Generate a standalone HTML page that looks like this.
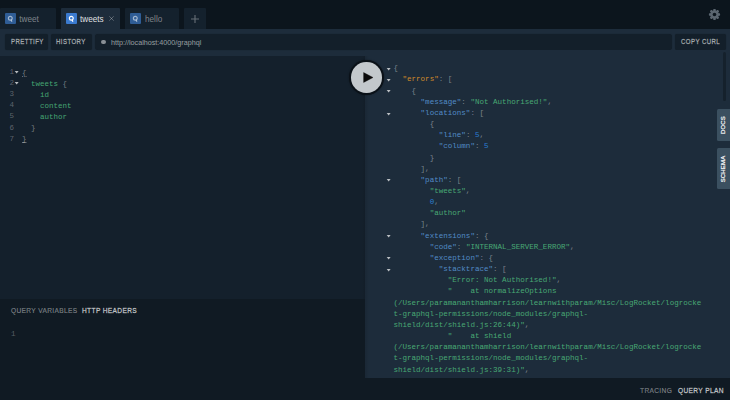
<!DOCTYPE html>
<html><head><meta charset="utf-8">
<style>
*{margin:0;padding:0;box-sizing:border-box}
html,body{width:730px;height:400px;overflow:hidden;background:#0c151d;font-family:"Liberation Sans",sans-serif}
.abs{position:absolute}
.tab{position:absolute;top:8px;height:20.5px;background:#14212d;border-radius:1px 1px 0 0}
.tab.active{background:#1d2c3b;height:21px}
.qicon{position:absolute;top:4.8px;width:11px;height:11px;border-radius:1px;background:#2f5d96}
.tab.active .qicon{background:#3b7bd0}
.qicon svg{position:absolute;left:0;top:0}
.lbl{position:absolute;white-space:nowrap;transform-origin:0 0;line-height:10px;font-family:"Liberation Sans",sans-serif}
.tabtxt{font-size:8.2px;color:rgba(255,255,255,0.45)}
.tab.active .tabtxt{color:rgba(255,255,255,0.88)}
#toolbar{position:absolute;left:0;top:28.5px;width:730px;height:27.5px;background:#1d2c3b}
.btn{position:absolute;top:34px;height:16px;background:#131f2a;border-radius:2px;box-shadow:0 0 1px rgba(0,0,0,0.35)}
.bt{font-size:7.9px;-webkit-text-stroke:0.35px rgba(255,255,255,0.45);color:rgba(255,255,255,0.5);top:37.3px;letter-spacing:0.55px;transform:scaleX(0.77)}
#qed{position:absolute;left:0;top:56px;width:365px;height:242.5px;background:#14202c}
#res{position:absolute;left:365px;top:50px;width:365px;height:328px;background:#1d2c3b}
#vars{position:absolute;left:0;top:298.5px;width:365px;height:101.5px;background:#101a23}
#foot{position:absolute;left:365px;top:378px;width:365px;height:22px;background:#101a23}
.code{position:absolute;font-family:"Liberation Mono",monospace;font-size:7.5px;white-space:pre;line-height:11.16px}
.ln{position:absolute;font-family:"Liberation Mono",monospace;font-size:7.5px;color:rgba(255,255,255,0.3);line-height:11.15px;white-space:pre}
.p{color:rgba(255,255,255,0.4)}
.mb{text-decoration:underline;text-decoration-color:rgba(255,255,255,0.35);text-underline-offset:1px}
.f{color:#45a673}
.k{color:#528bc6}
.s{color:#48a874}
.n{color:#2a7ed3}
.o{color:#d08a2a}
.arr{position:absolute;width:0;height:0;border-left:1.9px solid transparent;border-right:1.9px solid transparent;border-top:2.7px solid rgba(255,255,255,0.72)}
.side{position:absolute;left:717px;width:13px;background:#3b5060;border-radius:1.5px 0 0 1.5px}
.side span{position:absolute;left:47%;top:calc(50% + 0.6px);transform:translate(-50%,-50%) rotate(-90deg);font-size:6px;line-height:7px;-webkit-text-stroke:0.3px rgba(255,255,255,0.8);color:rgba(255,255,255,0.85);letter-spacing:0.15px;white-space:nowrap}
.ft{font-size:7.5px;-webkit-text-stroke:0.2px rgba(255,255,255,0.4);letter-spacing:0.4px;transform:scaleX(0.88)}
</style></head><body>

<!-- tabs -->
<div class="tab" style="left:0;width:56px">
  <div class="qicon" style="left:5px"><svg width="11" height="11" viewBox="0 0 11 11"><circle cx="5.3" cy="5.2" r="1.9" fill="none" stroke="rgba(255,255,255,0.55)" stroke-width="1.2"/><path d="M6.1 6.8L6.9 8.7" stroke="rgba(255,255,255,0.55)" stroke-width="1.2"/></svg></div>
  <div class="lbl tabtxt" style="left:19.3px;top:7.2px">tweet</div>
</div>
<div class="tab active" style="left:61px;width:59px">
  <div class="qicon" style="left:5px"><svg width="11" height="11" viewBox="0 0 11 11"><circle cx="5.3" cy="5.2" r="1.9" fill="none" stroke="#fff" stroke-width="1.2"/><path d="M6.1 6.8L6.9 8.7" stroke="#fff" stroke-width="1.2"/></svg></div>
  <div class="lbl tabtxt" style="left:19px;top:7.2px">tweets</div>
  <svg class="abs" style="left:48px;top:8.1px" width="5" height="5" viewBox="0 0 5 5"><path d="M0.3 0.3L4.7 4.7M4.7 0.3L0.3 4.7" stroke="rgba(255,255,255,0.4)" stroke-width="0.7"/></svg>
</div>
<div class="tab" style="left:125px;width:54px">
  <div class="qicon" style="left:5px"><svg width="11" height="11" viewBox="0 0 11 11"><circle cx="5.3" cy="5.2" r="1.9" fill="none" stroke="rgba(255,255,255,0.55)" stroke-width="1.2"/><path d="M6.1 6.8L6.9 8.7" stroke="rgba(255,255,255,0.55)" stroke-width="1.2"/></svg></div>
  <div class="lbl tabtxt" style="left:20px;top:7.2px">hello</div>
</div>
<div class="tab" style="left:184px;width:22px">
  <svg class="abs" style="left:7px;top:6.5px" width="8" height="8" viewBox="0 0 8 8"><path d="M4 0V8M0 4H8" stroke="rgba(255,255,255,0.35)" stroke-width="1.1"/></svg>
</div>

<!-- gear -->
<svg class="abs" style="left:700px;top:0px" width="30" height="30" viewBox="0 0 30 30"><g fill="#5b6670"><circle cx="14.5" cy="14.5" r="4.3"/><rect x="13.3" y="8.9" width="2.4" height="3.2" rx="0.6" transform="rotate(0 14.5 14.5)"/><rect x="13.3" y="8.9" width="2.4" height="3.2" rx="0.6" transform="rotate(45 14.5 14.5)"/><rect x="13.3" y="8.9" width="2.4" height="3.2" rx="0.6" transform="rotate(90 14.5 14.5)"/><rect x="13.3" y="8.9" width="2.4" height="3.2" rx="0.6" transform="rotate(135 14.5 14.5)"/><rect x="13.3" y="8.9" width="2.4" height="3.2" rx="0.6" transform="rotate(180 14.5 14.5)"/><rect x="13.3" y="8.9" width="2.4" height="3.2" rx="0.6" transform="rotate(225 14.5 14.5)"/><rect x="13.3" y="8.9" width="2.4" height="3.2" rx="0.6" transform="rotate(270 14.5 14.5)"/><rect x="13.3" y="8.9" width="2.4" height="3.2" rx="0.6" transform="rotate(315 14.5 14.5)"/></g><circle cx="14.5" cy="14.5" r="1.8" fill="#0c151d"/></svg>

<!-- toolbar -->
<div id="toolbar"></div>
<div class="btn" style="left:5px;width:42.5px"></div>
<div class="lbl bt" style="left:10.5px">PRETTIFY</div>
<div class="btn" style="left:51px;width:41px"></div>
<div class="lbl bt" style="left:55.8px">HISTORY</div>
<div class="btn" style="left:95px;width:577px;border-radius:3px"></div>
<div class="abs" style="left:101.4px;top:40px;width:4.2px;height:4.2px;border-radius:50%;background:rgba(255,255,255,0.5)"></div>
<div class="lbl" style="left:111px;top:37.5px;font-size:7.2px;color:rgba(255,255,255,0.55)">http://localhost:4000/graphql</div>
<div class="btn" style="left:675px;width:51px"></div>
<div class="lbl bt" style="left:680.5px">COPY CURL</div>

<!-- panels -->
<div id="qed"></div>
<div id="res"></div>
<div class="abs" style="left:362px;top:56px;width:3px;height:242.5px;background:linear-gradient(90deg,rgba(0,0,0,0),rgba(0,0,0,0.08))"></div>
<div class="abs" style="left:365px;top:56px;width:4px;height:322px;background:linear-gradient(90deg,rgba(0,0,0,0.1),rgba(0,0,0,0))"></div>
<div id="vars"></div>
<div id="foot"></div>

<!-- query editor -->
<div class="ln" style="left:9px;top:66.8px;width:5px;text-align:right">1
2
3
4
5
6
7</div>
<svg class="abs" style="left:14.4px;top:70px" width="6" height="5" viewBox="0 0 6 5"><path d="M0.7 1.1H4.6L2.65 3.5Z" fill="rgba(255,255,255,0.7)"/></svg>
<svg class="abs" style="left:14.4px;top:81.1px" width="6" height="5" viewBox="0 0 6 5"><path d="M0.7 1.1H4.6L2.65 3.5Z" fill="rgba(255,255,255,0.7)"/></svg>
<div class="code" style="left:22px;top:67.5px;line-height:11.15px"><span class="p mb">{</span>
  <span class="f">tweets</span> <span class="p">{</span>
    <span class="f">id</span>
    <span class="f">content</span>
    <span class="f">author</span>
  <span class="p">}</span>
<span class="p mb">}</span></div>

<!-- variables -->
<div class="lbl ft" style="left:10.8px;top:306px;color:rgba(255,255,255,0.36)">QUERY VARIABLES</div>
<div class="lbl ft" style="left:82.3px;top:306px;color:rgba(255,255,255,0.68);-webkit-text-stroke:0.3px rgba(255,255,255,0.55)">HTTP HEADERS</div>
<div class="ln" style="left:11px;top:328.5px">1</div>

<!-- results -->
<div class="abs" style="left:365px;top:56px;width:365px;height:322px;overflow:hidden"><div class="code" style="left:28.4px;top:7.3px;font-size:7.55px"><span class="p">{</span>
  <span class="o">"errors"</span><span class="p">: [</span>
    <span class="p">{</span>
      <span class="k">"message"</span><span class="p">: </span><span class="s">"Not Authorised!"</span><span class="p">,</span>
      <span class="k">"locations"</span><span class="p">: [</span>
        <span class="p">{</span>
          <span class="k">"line"</span><span class="p">: </span><span class="n">5</span><span class="p">,</span>
          <span class="k">"column"</span><span class="p">: </span><span class="n">5</span>
        <span class="p">}</span>
      <span class="p">],</span>
      <span class="k">"path"</span><span class="p">: [</span>
        <span class="s">"tweets"</span><span class="p">,</span>
        <span class="n">0</span><span class="p">,</span>
        <span class="s">"author"</span>
      <span class="p">],</span>
      <span class="k">"extensions"</span><span class="p">: {</span>
        <span class="k">"code"</span><span class="p">: </span><span class="s">"INTERNAL_SERVER_ERROR"</span><span class="p">,</span>
        <span class="k">"exception"</span><span class="p">: {</span>
          <span class="k">"stacktrace"</span><span class="p">: [</span>
            <span class="s">"Error: Not Authorised!"</span><span class="p">,</span>
            <span class="s">"    at normalizeOptions</span>
<span class="s">(/Users/paramananthamharrison/learnwithparam/Misc/LogRocket/logrocke</span>
<span class="s">t-graphql-permissions/node_modules/graphql-</span>
<span class="s">shield/dist/shield.js:26:44)"</span><span class="p">,</span>
            <span class="s">"    at shield</span>
<span class="s">(/Users/paramananthamharrison/learnwithparam/Misc/LogRocket/logrocke</span>
<span class="s">t-graphql-permissions/node_modules/graphql-</span>
<span class="s">shield/dist/shield.js:39:31)"</span><span class="p">,</span>
            <span class="s">"    at Object.</span></div></div>
<svg class="abs" style="left:386.00px;top:67.00px" width="6" height="5" viewBox="0 0 6 5"><path d="M0.7 1.1H4.6L2.65 3.5Z" fill="rgba(255,255,255,0.7)"/></svg>
<svg class="abs" style="left:386.00px;top:78.14px" width="6" height="5" viewBox="0 0 6 5"><path d="M0.7 1.1H4.6L2.65 3.5Z" fill="rgba(255,255,255,0.7)"/></svg>
<svg class="abs" style="left:386.00px;top:89.28px" width="6" height="5" viewBox="0 0 6 5"><path d="M0.7 1.1H4.6L2.65 3.5Z" fill="rgba(255,255,255,0.7)"/></svg>
<svg class="abs" style="left:386.00px;top:111.56px" width="6" height="5" viewBox="0 0 6 5"><path d="M0.7 1.1H4.6L2.65 3.5Z" fill="rgba(255,255,255,0.7)"/></svg>
<svg class="abs" style="left:386.00px;top:178.40px" width="6" height="5" viewBox="0 0 6 5"><path d="M0.7 1.1H4.6L2.65 3.5Z" fill="rgba(255,255,255,0.7)"/></svg>
<svg class="abs" style="left:386.00px;top:234.10px" width="6" height="5" viewBox="0 0 6 5"><path d="M0.7 1.1H4.6L2.65 3.5Z" fill="rgba(255,255,255,0.7)"/></svg>
<svg class="abs" style="left:386.00px;top:256.38px" width="6" height="5" viewBox="0 0 6 5"><path d="M0.7 1.1H4.6L2.65 3.5Z" fill="rgba(255,255,255,0.7)"/></svg>
<svg class="abs" style="left:386.00px;top:267.52px" width="6" height="5" viewBox="0 0 6 5"><path d="M0.7 1.1H4.6L2.65 3.5Z" fill="rgba(255,255,255,0.7)"/></svg>


<!-- scrollbar -->
<div class="abs" style="left:722.5px;top:52px;width:3.5px;height:48.5px;border-radius:2px;background:#15212c"></div>

<!-- side tabs -->
<div class="side" style="top:108.5px;height:32.8px"><span>DOCS</span></div>
<div class="side" style="top:147.5px;height:41.2px"><span>SCHEMA</span></div>

<!-- play button -->
<div class="abs" style="left:348.8px;top:59.5px;width:35.6px;height:35.6px;border-radius:50%;background:#0a1118;box-shadow:0 0 1.5px rgba(0,0,0,0.5)"></div>
<div class="abs" style="left:351.3px;top:62px;width:30.6px;height:30.6px;border-radius:50%;background:#c3c8cc"></div>
<svg class="abs" style="left:362.5px;top:72px" width="11" height="11" viewBox="0 0 11 11"><path d="M0.6 0.6L10 5.5L0.6 10.4Z" fill="#0b0b0b" stroke="#0b0b0b" stroke-width="0.4" stroke-linejoin="round"/></svg>

<!-- footer -->
<div class="lbl ft" style="left:640px;top:385.5px;color:rgba(255,255,255,0.35)">TRACING</div>
<div class="lbl ft" style="left:677.5px;top:385.5px;color:rgba(255,255,255,0.68);-webkit-text-stroke:0.3px rgba(255,255,255,0.55)">QUERY PLAN</div>

</body></html>
